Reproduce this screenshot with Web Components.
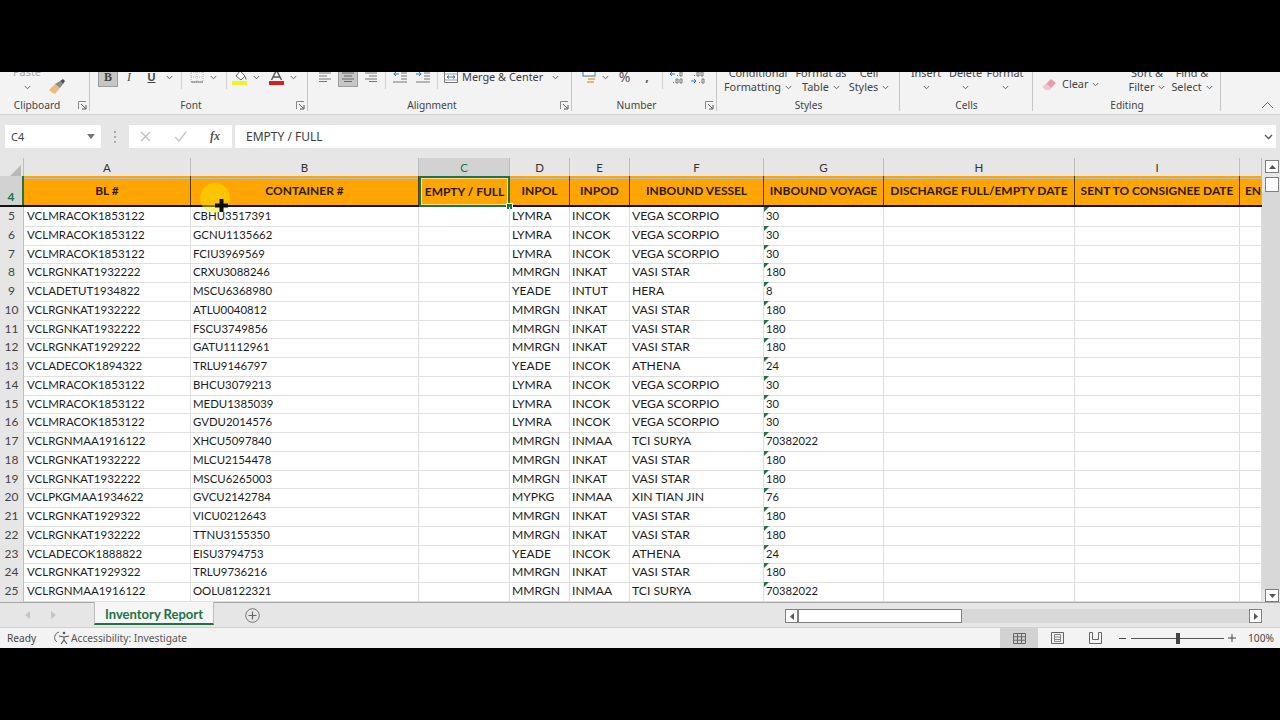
<!DOCTYPE html>
<html>
<head>
<meta charset="utf-8">
<title>Inventory Report</title>
<style>
  html, body { margin: 0; padding: 0; background: #000; }
  body { width: 1280px; height: 720px; overflow: hidden; display: flex; flex-direction: column; }
  .black { height: 72px; flex: none; }
  .black.bottom { flex: 1; }
</style>
</head>
<body>
<div class="black"></div>
<excel-window>
  <excel-ribbon></excel-ribbon>
  <formula-bar cell="C4" value="EMPTY / FULL"></formula-bar>
  <sheet-grid></sheet-grid>
  <sheet-tabs name="Inventory Report"></sheet-tabs>
  <status-bar></status-bar>
</excel-window>
<div class="black bottom"></div>

<script>
const UI_FONT = '"Noto Sans", "Open Sans", sans-serif';
const CELL_FONT = 'Lato, "Liberation Sans", sans-serif';
const chev = `<svg width="7" height="5" viewBox="0 0 7 5"><path d="M.8 1 3.5 3.8 6.2 1" fill="none" stroke="#666" stroke-width="1"/></svg>`;

class ExcelWindow extends HTMLElement {
  constructor() {
    super();
    this.attachShadow({ mode: "open" }).innerHTML = `
      <style>
        :host { display: flex; flex-direction: column; height: 576px; flex: none; overflow: hidden; background: #e6e6e6; }
      </style>
      <slot></slot>`;
  }
}

class RibbonGroup extends HTMLElement {
  constructor() {
    super();
    const hasLauncher = this.hasAttribute("launcher");
    const launcher = hasLauncher ? `
      <svg class="launch" width="9" height="9" viewBox="0 0 9 9">
        <path d="M.5 8V.5H8" fill="none" stroke="#888"/>
        <path d="M3 3l4.5 4.5M4 8h4V4" fill="none" stroke="#555"/>
      </svg>` : "";
    this.attachShadow({ mode: "open" }).innerHTML = `
      <style>
        :host { display: flex; flex-direction: column; justify-content: flex-end; flex: none; height: 42px; box-sizing: border-box; position: relative; }
        :host::after { content: ""; position: absolute; right: 0; top: 0; bottom: 3px; width: 1px; background: #c6c6c6; }
        .tools { display: flex; align-items: flex-start; height: 29px; flex: none; }
        .label { height: 16px; flex: none; text-align: center; font: 10.2px/14px ${UI_FONT}; color: #444; box-sizing: border-box; padding-right: ${hasLauncher ? 16 : 0}px; }
        .launch { position: absolute; right: 3px; bottom: 4px; }
      </style>
      <div class="tools"><slot></slot></div>
      <div class="label">${this.getAttribute("label")}</div>
      ${launcher}`;
  }
}

class ExcelRibbon extends HTMLElement {
  constructor() {
    super();
    const sep = (l) => `<i class="sep" style="margin-left:${l}px"></i>`;
    this.attachShadow({ mode: "open" }).innerHTML = `
      <style>
        :host { display: flex; flex: none; height: 42px; background: #f3f3f3; overflow: hidden; position: relative;
                font: 10.9px/14px ${UI_FONT}; color: #444; }
        .row { display: flex; height: 29px; }
        .t { display: flex; align-items: center; justify-content: center; flex: none; height: 16px; }
        .sep { display: block; flex: none; width: 1px; height: 20px; background: #d0d0d0; }
        .on { background: #c6c6c6; box-shadow: inset 0 0 0 1px #9c9c9c; height: 19px; margin-top: -1px; padding-top: 1px; padding-bottom: 2px; box-sizing: border-box; }
        .v { display: flex; flex-direction: column; align-items: center; flex: none; white-space: nowrap; }
        .v span { display: flex; align-items: center; gap: 4px; height: 14px; }
        .b { font: 700 12px/16px "Liberation Serif", serif; color: #444; }
        .collapse { position: absolute; right: 6px; bottom: 5px; }
      </style>

      <ribbon-group label="Clipboard" launcher style="width:90px">
        <div class="row" style="padding-left:10px">
          <div class="v" style="width:34px;color:#a8a8a8"><span style="height:10px;margin-top:-2px">Paste</span><span style="margin-top:3px">${chev}</span></div>
          <div style="margin-left:3px;margin-top:9px">
            <svg width="20" height="17" viewBox="0 0 20 17">
              <path d="M2 12l6-6 5 4-5 6c-2-1-4-2-6-4z" fill="#e8bd7d"/>
              <path d="M8 6l5-3 3 3-3 4z" fill="#8b8b8b"/><path d="M13 3l3-2 2 2-2 3z" fill="#4f4f4f"/>
            </svg>
          </div>
        </div>
      </ribbon-group>

      <ribbon-group label="Font" launcher style="width:218px">
        <div class="row" style="padding-left:8px">
          <div class="t b on" style="width:20px">B</div>
          <div class="t b" style="width:22px;font-style:italic;font-weight:400">I</div>
          <div class="t b" style="width:23px;text-decoration:underline;font-family:'Liberation Sans',sans-serif;font-size:11px">U</div>
          <div class="t" style="width:12px">${chev}</div>
          ${sep(6)}
          <div class="t" style="width:19px;margin-left:5px"><svg width="14" height="12" viewBox="0 0 14 12"><path d="M1 1h12v10H1z" fill="none" stroke="#aaa" stroke-dasharray="1 1"/><path d="M7 1v10M1 6h12" stroke="#bbb" stroke-dasharray="1 1"/><path d="M1 11h12" stroke="#777"/></svg></div>
          <div class="t" style="width:14px">${chev}</div>
          ${sep(6)}
          <div class="t" style="width:20px;margin-left:3px"><svg width="16" height="15" viewBox="0 0 16 15"><path d="M4 6l4-5 5 5-4 4z" fill="#fff" stroke="#666"/><path d="M13 6c1 1 2 3 1 4-1-1-1-3-1-4z" fill="#2a7ab8"/><rect x="0" y="11" width="15" height="4" fill="#f5ef2d"/></svg></div>
          <div class="t" style="width:12px">${chev}</div>
          <div class="t" style="width:20px;margin-left:4px"><svg width="17" height="15" viewBox="0 0 17 15"><path d="M3.5 10 8 1h1l4.5 9M5.5 7h6" fill="none" stroke="#555" stroke-width="1.4"/><rect x="1" y="11" width="15" height="4" fill="#d81f1f"/></svg></div>
          <div class="t" style="width:14px">${chev}</div>
        </div>
      </ribbon-group>

      <ribbon-group label="Alignment" launcher style="width:264px">
        <div class="row" style="padding-left:7px">
          <div class="t" style="width:20px"><svg width="14" height="10" viewBox="0 0 14 10"><path d="M1 1h12M1 4h8M1 7h12M1 9.5h8" stroke="#777" fill="none"/></svg></div>
          <div class="t on" style="width:20px;margin-left:3px"><svg width="14" height="10" viewBox="0 0 14 10"><path d="M1 1h12M3 4h8M1 7h12M3 9.5h8" stroke="#666" fill="none"/></svg></div>
          <div class="t" style="width:20px;margin-left:3px"><svg width="14" height="10" viewBox="0 0 14 10"><path d="M1 1h12M5 4h8M1 7h12M5 9.5h8" stroke="#777" fill="none"/></svg></div>
          ${sep(4)}
          <div class="t" style="width:20px;margin-left:4px"><svg width="15" height="11" viewBox="0 0 15 11"><path d="M6 2H1m2-2L.8 2 3 4" fill="none" stroke="#2f77b6"/><path d="M8 1h6M8 4h6M8 7h6M0 10h14" fill="none" stroke="#777"/></svg></div>
          <div class="t" style="width:20px;margin-left:3px"><svg width="15" height="11" viewBox="0 0 15 11"><path d="M0 2h5M3 0l2.2 2L3 4" fill="none" stroke="#2f77b6"/><path d="M8 1h6M8 4h6M8 7h6M0 10h14" fill="none" stroke="#777"/></svg></div>
          ${sep(4)}
          <div class="t" style="width:16px;margin-left:5px"><svg width="14" height="12" viewBox="0 0 14 12"><path d="M.5.5h13v11H.5z" fill="#fff" stroke="#777"/><path d="M.5 3h13M.5 9h13" stroke="#999"/><path d="M3 6h8M3 6l2-1.5M3 6l2 1.5M11 6 9 4.500M11 6 9 7.5" stroke="#2f77b6" fill="none"/></svg></div>
          <div style="flex:none;width:80px;margin-left:3px;white-space:nowrap;color:#3c3c3c;line-height:16px">Merge &amp; Center</div>
          <div class="t" style="width:10px;margin-left:8px">${chev}</div>
        </div>
      </ribbon-group>

      <ribbon-group label="Number" launcher style="width:145px">
        <div class="row" style="padding-left:10px">
          <div class="t" style="width:16px"><svg width="16" height="15" viewBox="0 0 16 15"><rect x="1" y="0" width="12" height="6" fill="#fff" stroke="#2f77b6"/><rect x="6" y="8" width="7" height="2" fill="#e7b96a"/><rect x="5" y="11" width="7" height="2" fill="#e7b96a"/></svg></div>
          <div class="t" style="width:12px;margin-left:1px">${chev}</div>
          <div class="t" style="width:17px;margin-left:5px;font-size:14px;color:#555">%</div>
          <div class="t" style="width:10px;margin-left:9px;font-weight:700;font-size:12px;color:#555">,</div>
          ${sep(10)}
          <div class="t" style="width:20px;margin-left:4px"><svg width="16" height="13" viewBox="0 0 16 13"><path d="M6 3H1M3 1 1 3l2 2" fill="none" stroke="#2f77b6"/><path d="M8 4.5h1M11 1h2v4h-2zM4 11.5h1M7 8h2v4H7zM11 8h2v4h-2z" fill="none" stroke="#777"/></svg></div>
          <div class="t" style="width:20px;margin-left:1px"><svg width="16" height="13" viewBox="0 0 16 13"><path d="M4 4.5h1M7 1h2v4H7zM11 1h2v4h-2zM9 11.5h1M12 8h2v4h-2z" fill="none" stroke="#777"/><path d="M1 10h5M4 8l2 2-2 2" fill="none" stroke="#2f77b6"/></svg></div>
        </div>
      </ribbon-group>

      <ribbon-group label="Styles" style="width:183px">
        <div class="row" style="padding-left:6px;margin-top:-3px">
          <div class="v" style="width:70px"><span>Conditional</span><span>Formatting ${chev}</span></div>
          <div class="v" style="width:50px;margin-left:3px"><span>Format as</span><span>Table ${chev}</span></div>
          <div class="v" style="width:40px;margin-left:3px"><span>Cell</span><span>Styles ${chev}</span></div>
        </div>
      </ribbon-group>

      <ribbon-group label="Cells" style="width:133px">
        <div class="row" style="padding-left:6px;margin-top:-3px">
          <div class="v" style="width:40px"><span>Insert</span><span>${chev}</span></div>
          <div class="v" style="width:39px"><span>Delete</span><span>${chev}</span></div>
          <div class="v" style="width:40px"><span>Format</span><span>${chev}</span></div>
        </div>
      </ribbon-group>

      <ribbon-group label="Editing" style="width:188px">
        <div class="row" style="padding-left:9px;margin-top:-3px">
          <div style="display:flex;align-items:center;height:36px;width:83px;flex:none">
            <svg width="15" height="15" viewBox="0 0 15 15"><path d="M1 10l8-8 5 4-7 7H4z" fill="#e79aa9"/><path d="M1 10l3 3h3l2-2-4-4z" fill="#f0c6cf"/></svg>
            <span style="margin-left:5px">Clear</span>
            <span style="margin-left:4px;display:flex">${chev}</span>
          </div>
          <div class="v" style="width:44px"><span>Sort &amp;</span><span>Filter ${chev}</span></div>
          <div class="v" style="width:44px;margin-left:1px"><span>Find &amp;</span><span>Select ${chev}</span></div>
        </div>
      </ribbon-group>

      <svg class="collapse" width="13" height="8" viewBox="0 0 13 8"><path d="M1 7 6.5 1.5 12 7" fill="none" stroke="#666"/></svg>`;
  }
}

class FormulaBar extends HTMLElement {
  constructor() {
    super();
    this.attachShadow({ mode: "open" }).innerHTML = `
      <style>
        :host { display: flex; flex: none; height: 44px; box-sizing: border-box; padding: 10px 4px 9px 5px; background: #e6e6e6; border-top: 1px solid #d2d2d2;
                font: 11px/1 ${UI_FONT}; color: #444; }
        .box { background: #fff; display: flex; align-items: center; height: 23px; box-sizing: border-box; }
        .name { width: 96px; padding: 0 6px; justify-content: space-between; }
        .dots { width: 28px; display: flex; flex-direction: column; align-items: center; justify-content: center; gap: 3px; }
        .dots i { width: 2px; height: 2px; background: #a9a9a9; display: block; }
        .btns { width: 103px; justify-content: space-between; padding: 0 12px 0 11px; box-sizing: border-box; margin-right: 3px; }
        .fx { font: italic 700 12px "Liberation Serif", serif; color: #555; }
        .input { flex: 1; padding: 0 3px 0 11px; justify-content: space-between; color: #3c3c3c; font-size: 12px; }
      </style>
      <div class="box name">
        <span>${this.getAttribute("cell")}</span>
        <svg width="8" height="5" viewBox="0 0 8 5"><path d="M0 0h8L4 5z" fill="#777"/></svg>
      </div>
      <div class="dots"><i></i><i></i><i></i></div>
      <div class="box btns">
        <svg width="11" height="11" viewBox="0 0 11 11"><path d="M1 1l9 9M10 1l-9 9" stroke="#bdbdbd" stroke-width="1.3"/></svg>
        <svg width="13" height="11" viewBox="0 0 13 11"><path d="M1 6l4 4 7-9" fill="none" stroke="#c4c4c4" stroke-width="1.3"/></svg>
        <span class="fx">fx</span>
      </div>
      <div class="box input">
        <span>${this.getAttribute("value")}</span>
        <svg width="9" height="6" viewBox="0 0 9 6"><path d="M1 1l3.5 3.5L8 1" fill="none" stroke="#555" stroke-width="1.3"/></svg>
      </div>`;
  }
}

const COLS = ["A","B","C","D","E","F","G","H","I"];
const WIDTHS = "24px 167px 228px 91px 60px 60px 134px 120px 191px 165px 22px";
const HEADS = ["BL #","CONTAINER #","EMPTY / FULL","INPOL","INPOD","INBOUND VESSEL","INBOUND VOYAGE","DISCHARGE FULL/EMPTY DATE","SENT TO CONSIGNEE DATE","EN"];

const VEGA = ["LYMRA","INCOK","VEGA SCORPIO","30"];
const VASI = ["MMRGN","INKAT","VASI STAR","180"];
const TCI = ["MMRGN","INMAA","TCI SURYA","70382022"];
const ATH = ["YEADE","INCOK","ATHENA","24"];
const ROWS = [
  ["VCLMRACOK1853122","CBHU3517391",VEGA],
  ["VCLMRACOK1853122","GCNU1135662",VEGA],
  ["VCLMRACOK1853122","FCIU3969569",VEGA],
  ["VCLRGNKAT1932222","CRXU3088246",VASI],
  ["VCLADETUT1934822","MSCU6368980",["YEADE","INTUT","HERA","8"]],
  ["VCLRGNKAT1932222","ATLU0040812",VASI],
  ["VCLRGNKAT1932222","FSCU3749856",VASI],
  ["VCLRGNKAT1929222","GATU1112961",VASI],
  ["VCLADECOK1894322","TRLU9146797",ATH],
  ["VCLMRACOK1853122","BHCU3079213",VEGA],
  ["VCLMRACOK1853122","MEDU1385039",VEGA],
  ["VCLMRACOK1853122","GVDU2014576",VEGA],
  ["VCLRGNMAA1916122","XHCU5097840",TCI],
  ["VCLRGNKAT1932222","MLCU2154478",VASI],
  ["VCLRGNKAT1932222","MSCU6265003",VASI],
  ["VCLPKGMAA1934622","GVCU2142784",["MYPKG","INMAA","XIN TIAN JIN","76"]],
  ["VCLRGNKAT1929322","VICU0212643",VASI],
  ["VCLRGNKAT1932222","TTNU3155350",VASI],
  ["VCLADECOK1888822","EISU3794753",ATH],
  ["VCLRGNKAT1929322","TRLU9736216",VASI],
  ["VCLRGNMAA1916122","OOLU8122321",TCI],
];

class SheetGrid extends HTMLElement {
  constructor() {
    super();
    const colHead = `<div class="row colhead">
        <div class="corner"><svg width="13" height="13" viewBox="0 0 13 13"><path d="M13 0v13H0z" fill="#b8b8b8"/></svg></div>
        ${COLS.map(c => `<div class="ch ${c === "C" ? "sel" : ""}">${c}</div>`).join("")}
        <div class="ch"></div>
      </div>`;
    const head = `<div class="row head">
        <div class="rh hot">4</div>
        ${HEADS.map((h, i) => `<div class="hc ${i === 2 ? "active" : ""} ${i === 9 ? "cut" : ""}">${h}</div>`).join("")}
      </div>`;
    const body = ROWS.map((r, i) => {
      const [pol, pod, vessel, voy] = r[2];
      return `<div class="row data">
        <div class="rh">${i + 5}</div>
        <div class="c a">${r[0]}</div><div class="c b">${r[1]}</div><div class="c"></div>
        <div class="c d">${pol}</div><div class="c d">${pod}</div><div class="c f">${vessel}</div>
        <div class="c g">${voy}</div><div class="c"></div><div class="c"></div><div class="c"></div>
      </div>`;
    }).join("");
    this.attachShadow({ mode: "open" }).innerHTML = `
      <style>
        :host { display: flex; flex: none; height: 445px; overflow: hidden; position: relative; background: #fff; box-sizing: border-box; border-bottom: 1px solid #a6a6a6; }
        .main { width: 1262px; flex: none; overflow: hidden; position: relative; font: 12px/18.75px ${CELL_FONT}; color: #1c1c1c; }
        .row { display: grid; grid-template-columns: ${WIDTHS}; }
        .colhead { height: 18px; background: #e6e6e6; font: 11.5px/19px ${CELL_FONT}; color: #333; text-align: center; }
        .corner { display: flex; justify-content: flex-end; align-items: flex-end; padding: 0 2px 1px 0; box-sizing: border-box; border-right: 1px solid #bdbdbd; }
        .ch { border-right: 1px solid #bdbdbd; border-bottom: 1px solid #bdbdbd; box-sizing: border-box; }
        .ch.sel { background: #d2d2d2; color: #217346; border-bottom: 2px solid #217346; }
        .head { height: 31px; background: #ffa500; border-bottom: 2px solid #111; box-sizing: border-box; font-weight: 700; color: #2b1800; }
        .hc { display: flex; align-items: center; justify-content: center; padding-top: 1px; white-space: nowrap; overflow: hidden; border-right: 1px solid #5a3a00; box-sizing: border-box; font-size: 11.95px; }
        .hc.cut { justify-content: flex-start; padding-left: 5px; border-right: 0; }
        .hc.active { box-shadow: inset 0 0 0 2px #217346, inset 0 0 0 3px #ffdf8f; margin-bottom: -2px; height: 31px; position: relative; border: 0; overflow: visible; }
        .hc.active::after { content: ""; position: absolute; right: -3px; bottom: -3px; width: 5px; height: 5px; background: #217346; border: 1px solid #fff; }
        .rh { background: #e6e6e6; color: #444; text-align: center; border-right: 1px solid #bdbdbd; border-bottom: 1px solid #d0d0d0; box-sizing: border-box; font-size: 12px; }
        .rh.hot { background: #d2d2d2; color: #217346; display: flex; align-items: flex-end; justify-content: center; line-height: 16px; border-right: 2px solid #217346; border-bottom: 0; }
        .data { height: 18.75px; }
        .c { border-right: 1.5px solid #dedede; border-bottom: 1.5px solid #e0e0e0; box-sizing: border-box; padding-left: 2px; white-space: nowrap; overflow: hidden; position: relative; }
        .a { font-size: 11.5px; padding-left: 3px; }
        .b { font-size: 11.4px; }
        .d { font-size: 12.1px; }
        .f { font-size: 12.2px; }
        .g { font-size: 11.2px; }
        .g::before { content: ""; position: absolute; left: 0; top: 0; border-top: 5px solid #217346; border-right: 5px solid transparent; }
        .spot { position: absolute; left: 200px; top: 25px; width: 30px; height: 30px; border-radius: 50%; background: rgba(255, 236, 0, .45); }
        .cursor { position: absolute; left: 215px; top: 41px; }
        .vbar { width: 18px; flex: none; background: #e6e6e6; display: flex; flex-direction: column; align-items: flex-start; box-sizing: border-box; padding: 2px 0 0 3px; }
        .sb { width: 14px; height: 13px; background: #fff; border: 1px solid #7f7f7f; box-sizing: border-box; display: flex; align-items: center; justify-content: center; flex: none; }
        .thumb { width: 14px; height: 15px; margin-top: 4px; background: #fff; border: 1px solid #7f7f7f; box-sizing: border-box; flex: none; }
        .track { flex: 1; width: 18px; margin-left: -3px; background: #d8d8d8; }
      </style>
      <div class="main">
        ${colHead}${head}${body}
        <div class="row data"><div class="rh"></div><div class="c"></div><div class="c"></div><div class="c"></div><div class="c"></div><div class="c"></div><div class="c"></div><div class="c"></div><div class="c"></div><div class="c"></div><div class="c"></div></div>
        <div class="spot"></div>
        <svg class="cursor" width="13" height="13" viewBox="0 0 13 13"><path d="M4.5 0h4v4.5H13v4H8.5V13h-4V8.5H0v-4h4.5z" fill="#0b0b0b"/></svg>
      </div>
      <div class="vbar">
        <div class="sb"><svg width="7" height="4" viewBox="0 0 7 4"><path d="M0 4h7L3.5 0z" fill="#555"/></svg></div>
        <div class="thumb"></div>
        <div class="track"></div>
        <div class="sb"><svg width="7" height="4" viewBox="0 0 7 4"><path d="M0 0h7L3.5 4z" fill="#555"/></svg></div>
      </div>`;
  }
}

class SheetTabs extends HTMLElement {
  constructor() {
    super();
    this.attachShadow({ mode: "open" }).innerHTML = `
      <style>
        :host { display: flex; flex: none; height: 25px; background: #e6e6e6; align-items: flex-start; position: relative; box-sizing: border-box; border-bottom: 1px solid #d0d0d0; }
        .nav { width: 94px; flex: none; display: flex; gap: 21px; padding: 8px 0 0 25px; box-sizing: border-box; }
        .tab { flex: none; width: 120px; height: 23px; padding-top: 3px; background: #f6f6f6; color: #217346; display: flex; align-items: center; justify-content: center; box-sizing: border-box; border-bottom: 2px solid #217346; border-left: 1px solid #bdbdbd; border-right: 1px solid #bdbdbd; margin-top: -1px; font: 700 13px/1 ${CELL_FONT}; }
        .add { margin-left: 31px; margin-top: 5px; flex: none; }
        .hbar { position: absolute; left: 785px; top: 6px; width: 477px; height: 14px; background: #d8d8d8; display: flex; }
        .sb { width: 13px; height: 14px; background: #fff; border: 1px solid #7f7f7f; box-sizing: border-box; display: flex; align-items: center; justify-content: center; flex: none; }
        .thumb { width: 164px; height: 14px; background: #fff; border: 1px solid #7f7f7f; box-sizing: border-box; flex: none; }
        .gap { flex: 1; }
      </style>
      <div class="nav">
        <svg width="5" height="8" viewBox="0 0 5 8"><path d="M5 0v8L0 4z" fill="#c4c4c4"/></svg>
        <svg width="5" height="8" viewBox="0 0 5 8"><path d="M0 0v8l5-4z" fill="#c4c4c4"/></svg>
      </div>
      <div class="tab">${this.getAttribute("name")}</div>
      <svg class="add" width="15" height="15" viewBox="0 0 15 15"><circle cx="7.5" cy="7.5" r="6.8" fill="none" stroke="#777"/><path d="M7.5 3.5v8M3.5 7.5h8" stroke="#666" stroke-width="1.2"/></svg>
      <div class="hbar">
        <div class="sb"><svg width="4" height="7" viewBox="0 0 4 7"><path d="M4 0v7L0 3.5z" fill="#555"/></svg></div>
        <div class="thumb"></div>
        <div class="gap"></div>
        <div class="sb"><svg width="4" height="7" viewBox="0 0 4 7"><path d="M0 0v7l4-3.5z" fill="#555"/></svg></div>
      </div>`;
  }
}

class StatusBar extends HTMLElement {
  constructor() {
    super();
    this.attachShadow({ mode: "open" }).innerHTML = `
      <style>
        :host { display: flex; flex: none; height: 20px; background: #f3f3f3; align-items: center; box-sizing: border-box; font: 10.2px/1 ${UI_FONT}; color: #444; }
        .ready { margin-left: 7px; width: 46px; flex: none; }
        .acc { display: flex; align-items: center; flex: none; color: #555; }
        .right { margin-left: auto; display: flex; align-items: center; height: 100%; }
        .view { width: 38px; height: 100%; display: flex; align-items: center; justify-content: center; flex: none; }
        .view.on { background: #d2d2d2; }
        .zoom { display: flex; align-items: center; margin-left: 5px; flex: none; }
        .line { width: 93px; height: 1px; background: #555; margin: 0 4px 0 5px; position: relative; }
        .knob { position: absolute; left: 45px; top: -5px; width: 4px; height: 11px; background: #444; }
        .pct { width: 38px; text-align: right; padding-right: 6px; box-sizing: border-box; margin-left: 6px; flex: none; }
      </style>
      <div class="ready">Ready</div>
      <div class="acc">
        <svg width="18" height="14" viewBox="0 0 18 14"><path d="M6 1a6 6 0 0 0-4 8l2 2" fill="none" stroke="#666"/><circle cx="11" cy="2" r="1.3" fill="#555"/><path d="M6 5l5 1 5-1M11 6v3l-3 4M11 9l3 4" fill="none" stroke="#555" stroke-width="1.2"/></svg>
        <span>Accessibility: Investigate</span>
      </div>
      <div class="right">
        <div class="view on"><svg width="13" height="11" viewBox="0 0 13 11"><path d="M.5.5h12v10H.5zM.5 3.800h12M.5 7.200h12M4.500.5v10M8.500.5v10" fill="none" stroke="#666"/></svg></div>
        <div class="view"><svg width="13" height="12" viewBox="0 0 13 12"><path d="M.5.5h12v11H.5z" fill="none" stroke="#666"/><path d="M3.5 2.5h6v7h-6zM3.5 5h6M3.5 7.5h6" fill="none" stroke="#888"/></svg></div>
        <div class="view"><svg width="13" height="12" viewBox="0 0 13 12"><path d="M.5 11.5V.5h3v7h6v-7h3v11z" fill="none" stroke="#666"/></svg></div>
        <div class="zoom">
          <svg width="7" height="1" viewBox="0 0 7 1"><path d="M0 .5h7" stroke="#444"/></svg>
          <div class="line"><div class="knob"></div></div>
          <svg width="8" height="8" viewBox="0 0 8 8"><path d="M0 4h8M4 0v8" stroke="#444"/></svg>
        </div>
        <div class="pct">100%</div>
      </div>`;
  }
}

customElements.define("excel-window", ExcelWindow);
customElements.define("ribbon-group", RibbonGroup);
customElements.define("excel-ribbon", ExcelRibbon);
customElements.define("formula-bar", FormulaBar);
customElements.define("sheet-grid", SheetGrid);
customElements.define("sheet-tabs", SheetTabs);
customElements.define("status-bar", StatusBar);
</script>
</body>
</html>
